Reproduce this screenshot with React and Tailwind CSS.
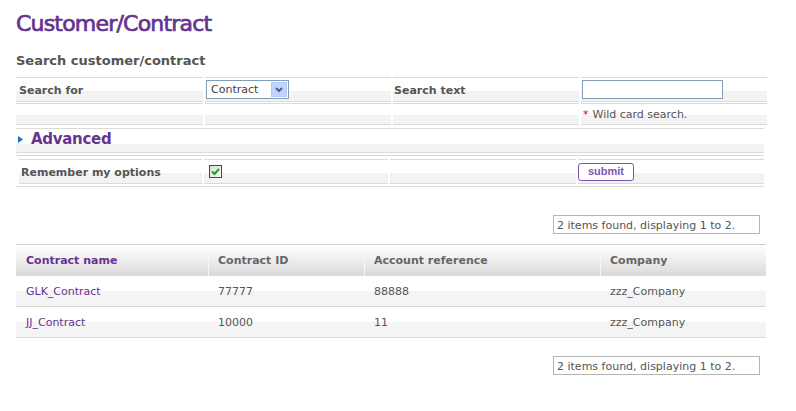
import React from 'react';

const font = { fontFamily: '"DejaVu Sans", Verdana, sans-serif' };

function Cell({ children, className = '' }) {
  return (
    <div
      className={`border-t border-b border-[#dadada] bg-[linear-gradient(to_bottom,#ffffff_55%,#f3f3f3_55%)] flex items-center ${className}`}
    >
      {children}
    </div>
  );
}

function Pager() {
  return (
    <div className="flex justify-end pr-[6px]">
      <div className="w-[207px] h-[19px] border border-[#b5b5b5] text-[11px] text-[#555] leading-[17px] pl-[3px] pt-[1px] whitespace-nowrap">
        2 items found, displaying 1 to 2.
      </div>
    </div>
  );
}

const rows = [
  { name: 'GLK_Contract', id: '77777', acc: '88888', company: 'zzz_Company' },
  { name: 'JJ_Contract', id: '10000', acc: '11', company: 'zzz_Company' },
];

export default function App() {
  return (
    <div className="w-[796px] h-[411px] bg-white pl-[16px] pr-[30px] overflow-hidden" style={font}>
      <h1 className="text-[22px] font-normal [-webkit-text-stroke:0.7px_#66338f] text-[#66338f] pt-[9px] leading-[30px] tracking-[-0.8px]">
        Customer/Contract
      </h1>
      <h2 className="text-[13px] font-bold text-[#555] mt-[13px] leading-[18px]">
        Search customer/contract
      </h2>

      <div className="mt-[7px] w-[748px]">
        <div className="grid grid-cols-[187px_186px_186px_186px] gap-x-[2px]">
          <Cell className="h-[25px] pl-[3px] pt-[3px] text-[11px] font-bold text-[#555]">Search for</Cell>
          <Cell className="h-[25px] pl-[1px]">
            <div className="w-[83px] h-[19px] border border-[#7f9db9] bg-white flex items-center justify-between pl-[4px] pr-[1px]">
              <span className="text-[11px] text-[#444] pt-[1px]">Contract</span>
              <span className="w-[16px] h-[15px] bg-[#c3d3fd] border border-[#b4c8f6] flex items-center justify-center">
                <svg width="8" height="6" viewBox="0 0 8 6">
                  <path d="M1 1 L4 4 L7 1" stroke="#4d6185" strokeWidth="2" fill="none" />
                </svg>
              </span>
            </div>
          </Cell>
          <Cell className="h-[25px] pl-[1px] pt-[3px] text-[11px] font-bold text-[#555]">Search text</Cell>
          <Cell className="h-[25px] pl-[1px]">
            <div className="w-[141px] h-[19px] border border-[#7f9db9] bg-white" />
          </Cell>
          <Cell className="h-[22px] mt-[1px]" />
          <Cell className="h-[22px] mt-[1px]" />
          <Cell className="h-[22px] mt-[1px]" />
          <Cell className="h-[22px] mt-[1px] pl-[2px] pt-[3px] text-[11px] text-[#555]">
            <span className="text-[#e00] mr-[4px]">*</span>Wild card search.
          </Cell>
        </div>

        <div className="mt-[3px] border-t border-b border-[#dadada] h-[25px] bg-[linear-gradient(to_bottom,#ffffff_65%,#f3f3f3_65%)] flex items-center pl-[2px] pb-[3px]">
          <svg width="5" height="7" viewBox="0 0 5 7" className="mt-[1px]">
            <path d="M0 0 L5 3.5 L0 7 Z" fill="#1f6fcf" />
          </svg>
          <span className="ml-[8px] text-[15px] font-bold text-[#66338f] leading-[18px] tracking-[-0.3px]">Advanced</span>
        </div>

        <div className="mt-[2px] border-t border-b border-[#dadada] pt-[3px] pb-[2px] pl-[3px] pr-[2px]">
          <div className="grid grid-cols-[183px_184px_186px_186px] gap-x-[2px]">
            <Cell className="h-[25px] pl-[2px] pt-[3px] text-[11px] font-bold text-[#555]">Remember my options</Cell>
            <Cell className="h-[25px] pl-[5px]">
              <span className="w-[13px] h-[13px] border border-[#1c5180] bg-[linear-gradient(135deg,#dcdcd6,#fbfbf9)] flex items-center justify-center">
                <svg width="9" height="8" viewBox="0 0 9 8">
                  <path d="M1 3.5 L3.5 6 L8 1" stroke="#21a121" strokeWidth="2" fill="none" />
                </svg>
              </span>
            </Cell>
            <Cell className="h-[25px]" />
            <Cell className="h-[25px]">
              <span className="h-[18px] w-[56px] border border-[#7d55b0] rounded-[3px] bg-white text-[11px] font-bold text-[#7d55b0] flex items-center justify-center" style={{ fontFamily: '"Liberation Sans", Arial, sans-serif' }}>
                submit
              </span>
            </Cell>
          </div>
        </div>
      </div>

      <div className="mt-[28px]">
        <Pager />
      </div>

      <div className="mt-[10px] w-[750px]">
        <div className="grid grid-cols-[193px_156px_236px_165px] h-[32px] border-t border-[#cfcfcf] bg-[linear-gradient(to_bottom,#ffffff,#f1f1f1_40%,#d9d9d9)] text-[11px] font-bold">
          <div className="flex items-center pl-[10px] pt-[2px] text-[#66338f] border-r border-[#f7f7f7]">Contract name</div>
          <div className="flex items-center pl-[9px] pt-[2px] text-[#666] border-r border-[#f7f7f7]">Contract ID</div>
          <div className="flex items-center pl-[9px] pt-[2px] text-[#666] border-r border-[#f7f7f7]">Account reference</div>
          <div className="flex items-center pl-[9px] pt-[2px] text-[#666]">Company</div>
        </div>
        {rows.map((r) => (
          <div
            key={r.name}
            className="grid grid-cols-[193px_156px_236px_165px] h-[31px] border-b border-[#d9d9d9] bg-[linear-gradient(to_bottom,#ffffff_50%,#f4f4f4_50%)] text-[11px] text-[#555]"
          >
            <div className="flex items-center pl-[10px] pt-[3px] text-[#66338f]">{r.name}</div>
            <div className="flex items-center pl-[9px] pt-[3px]">{r.id}</div>
            <div className="flex items-center pl-[9px] pt-[3px]">{r.acc}</div>
            <div className="flex items-center pl-[9px] pt-[3px]">{r.company}</div>
          </div>
        ))}
      </div>

      <div className="mt-[18px]">
        <Pager />
      </div>
    </div>
  );
}
